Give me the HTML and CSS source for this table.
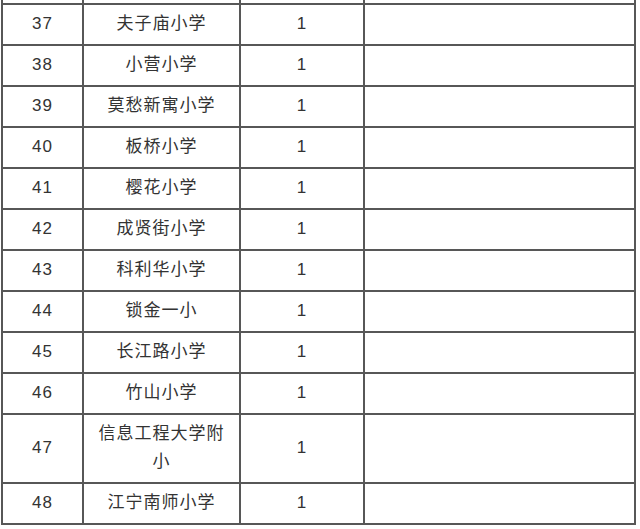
FILE: index.html
```html
<!DOCTYPE html>
<html lang="zh-CN">
<head>
<meta charset="utf-8">
<title>学校名单</title>
<link rel="stylesheet" href="styles.css">
</head>
<body>
<table class="list">
  <colgroup>
    <col class="c-no">
    <col class="c-name">
    <col class="c-count">
    <col class="c-note">
  </colgroup>
  <tbody>
    <tr class="cut"><td></td><td></td><td></td><td></td></tr>
    <tr><td>37</td><td>夫子庙小学</td><td>1</td><td></td></tr>
    <tr><td>38</td><td>小营小学</td><td>1</td><td></td></tr>
    <tr><td>39</td><td>莫愁新寓小学</td><td>1</td><td></td></tr>
    <tr><td>40</td><td>板桥小学</td><td>1</td><td></td></tr>
    <tr><td>41</td><td>樱花小学</td><td>1</td><td></td></tr>
    <tr><td>42</td><td>成贤街小学</td><td>1</td><td></td></tr>
    <tr><td>43</td><td>科利华小学</td><td>1</td><td></td></tr>
    <tr><td>44</td><td>锁金一小</td><td>1</td><td></td></tr>
    <tr><td>45</td><td>长江路小学</td><td>1</td><td></td></tr>
    <tr><td>46</td><td>竹山小学</td><td>1</td><td></td></tr>
    <tr><td>47</td><td>信息工程大学附小</td><td>1</td><td></td></tr>
    <tr><td>48</td><td>江宁南师小学</td><td>1</td><td></td></tr>
  </tbody>
</table>
</body>
</html>
```
FILE: styles.css
```css
html, body {
  margin: 0;
  padding: 0;
  background: #ffffff;
}

.list {
  border-collapse: collapse;
  table-layout: fixed;
  width: 635px;
  margin: 0 0 0 1px;
  font-family: "Liberation Sans", "Noto Sans CJK SC", sans-serif;
  font-size: 17px;
  letter-spacing: 1px;
  color: #333333;
}

.c-no { width: 81px; }
.c-name { width: 157px; }
.c-count { width: 124px; }
.c-note { width: 271px; }

.list td {
  border: 2px solid #575757;
  text-align: center;
  vertical-align: middle;
  line-height: 28px;
  padding: 5px 10px 6px;
  word-break: break-all;
}

.list .cut td {
  border-top: hidden;
  height: 3px;
  padding: 0;
  line-height: 0;
  font-size: 0;
}
```
